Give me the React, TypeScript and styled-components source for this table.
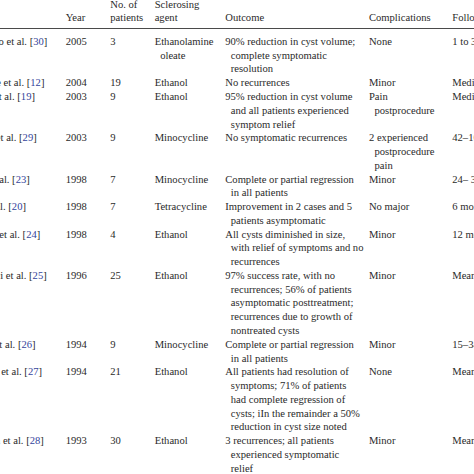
import React from "react";
import styled, { createGlobalStyle } from "styled-components";

const Global = createGlobalStyle`
  html, body { margin: 0; padding: 0; background: #fff; }
  body { width: 474px; height: 474px; overflow: hidden; }
`;

const Viewport = styled.div`
  width: 474px;
  height: 474px;
  overflow: hidden;
  background: #fff;
`;

const Table = styled.table`
  border-collapse: collapse;
  table-layout: fixed;
  width: 600.3px;
  margin: -2.4px 0 0 -48px;
  font-family: "Liberation Serif", "Times New Roman", serif;
  font-size: 10.6px;
  line-height: 13.77px;
  color: #2a2a2a;
`;

const Col = styled.col<{ $w: number }>`
  width: ${(p) => p.$w}px;
`;

const HeadCell = styled.th`
  text-align: left;
  vertical-align: bottom;
  font-weight: normal;
  padding: 0 0 3px 0;
  border-bottom: 1px solid #4a4a4a;
  white-space: pre-line;
`;

const Cell = styled.td`
  vertical-align: top;
  padding: 0;
  tbody tr:first-child > & {
    padding-top: 5.8px;
  }
`;

const Hang = styled.div`
  padding-left: 5.5px;
  text-indent: -5.5px;
  white-space: pre-line;
  overflow: visible;
`;

const NoWrap = styled.div`
  white-space: nowrap;
`;

const Ref = styled.span`
  color: #33449c;
`;

type Row = {
  author: string;
  ref: number;
  year: string;
  n: string;
  agent: string;
  outcome: string;
  comp: string;
  follow: string;
};

const rows: Row[] = [
  { author: "Montenegro", ref: 30, year: "2005", n: "3", agent: "Ethanolamine\noleate", outcome: "90% reduction in cyst volume;\ncomplete symptomatic\nresolution", comp: "None", follow: "1 to 3 months" },
  { author: "Bonsignore", ref: 12, year: "2004", n: "19", agent: "Ethanol", outcome: "No recurrences", comp: "Minor", follow: "Median 18 months" },
  { author: "Okamura", ref: 19, year: "2003", n: "9", agent: "Ethanol", outcome: "95% reduction in cyst volume\nand all patients experienced\nsymptom relief", comp: "Pain\npostprocedure", follow: "Median 12 months" },
  { author: "Hirakawa", ref: 29, year: "2003", n: "9", agent: "Minocycline", outcome: "No symptomatic recurrences", comp: "2 experienced\npostprocedure\npain", follow: "42–108 months" },
  { author: "Yamada", ref: 23, year: "1998", n: "7", agent: "Minocycline", outcome: "Complete or partial regression\nin all patients", comp: "Minor", follow: "24– 36 months" },
  { author: "Tanaka", ref: 20, year: "1998", n: "7", agent: "Tetracycline", outcome: "Improvement in 2 cases and 5\npatients asymptomatic", comp: "No major", follow: "6 months" },
  { author: "Nakagawa", ref: 24, year: "1998", n: "4", agent: "Ethanol", outcome: "All cysts diminished in size,\nwith relief of symptoms and no\nrecurrences", comp: "Minor", follow: "12 months" },
  { author: "Giacomucci", ref: 25, year: "1996", n: "25", agent: "Ethanol", outcome: "97% success rate, with no\nrecurrences; 56% of patients\nasymptomatic posttreatment;\nrecurrences due to growth of\nnontreated cysts", comp: "Minor", follow: "Mean 28 months" },
  { author: "Okumura", ref: 26, year: "1994", n: "9", agent: "Minocycline", outcome: "Complete or partial regression\nin all patients", comp: "Minor", follow: "15–34 months" },
  { author: "Kawamura", ref: 27, year: "1994", n: "21", agent: "Ethanol", outcome: "All patients had resolution of\nsymptoms; 71% of patients\nhad complete regression of\ncysts; iIn the remainder a 50%\nreduction in cyst size noted", comp: "None", follow: "Mean 24 months" },
  { author: "Richardson", ref: 28, year: "1993", n: "30", agent: "Ethanol", outcome: "3 recurrences; all patients\nexperienced symptomatic\nrelief", comp: "Minor", follow: "Mean 20 months" },
];

const widths = [113.7, 44.6, 44.4, 70.6, 143.7, 83.3, 100];

export default function App() {
  return (
    <Viewport>
      <Global />
      <Table>
        <colgroup>
          {widths.map((w, i) => (
            <Col key={i} $w={w} />
          ))}
        </colgroup>
        <thead>
          <tr>
            <HeadCell>Reference</HeadCell>
            <HeadCell>Year</HeadCell>
            <HeadCell>{"No. of\npatients"}</HeadCell>
            <HeadCell>{"Sclerosing\nagent"}</HeadCell>
            <HeadCell>Outcome</HeadCell>
            <HeadCell>Complications</HeadCell>
            <HeadCell>Follow-up</HeadCell>
          </tr>
        </thead>
        <tbody>
          {rows.map((r) => (
            <tr key={r.ref}>
              <Cell>
                <NoWrap>
                  {r.author} et al. [<Ref>{r.ref}</Ref>]
                </NoWrap>
              </Cell>
              <Cell>{r.year}</Cell>
              <Cell>{r.n}</Cell>
              <Cell>
                <Hang>{r.agent}</Hang>
              </Cell>
              <Cell>
                <Hang>{r.outcome}</Hang>
              </Cell>
              <Cell>
                <Hang>{r.comp}</Hang>
              </Cell>
              <Cell>
                <NoWrap>{r.follow}</NoWrap>
              </Cell>
            </tr>
          ))}
        </tbody>
      </Table>
    </Viewport>
  );
}
